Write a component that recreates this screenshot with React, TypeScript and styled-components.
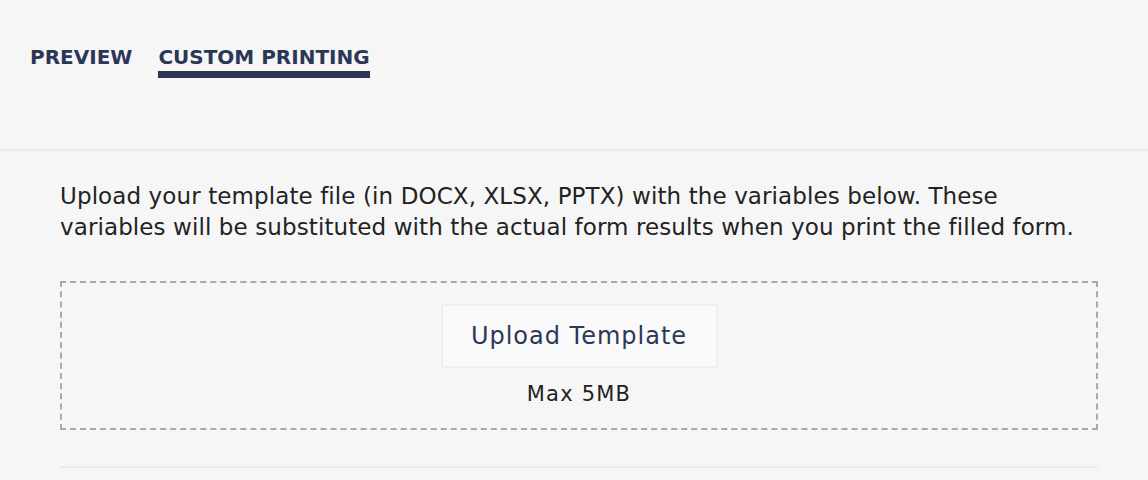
import React from "react";
import styled, { createGlobalStyle } from "styled-components";

const Global = createGlobalStyle`
  html, body { margin: 0; padding: 0; background: #f6f6f6; }
  body { font-family: "DejaVu Sans", "Noto Sans", sans-serif; color: #222; }
`;

const Page = styled.div`
  display: flex;
  flex-direction: column;
  min-height: 480px;
  background: #f6f6f6;
`;

const Header = styled.header`
  height: 151px;
  border-bottom: 2px solid #ebebeb;
  box-sizing: border-box;
  padding: 45px 0 0 30px;
  display: flex;
  align-items: flex-start;
  gap: 26px;
`;

const Tab = styled.button<{ $active?: boolean }>`
  appearance: none;
  background: none;
  border: none;
  padding: 0 0 2px;
  margin: 0;
  font-family: "DejaVu Sans", sans-serif;
  font-weight: 700;
  font-size: 20px;
  line-height: 24px;
  color: #2c3757;
  border-bottom: 7px solid ${(p) => (p.$active ? "#2c3757" : "transparent")};
  cursor: pointer;
`;

const Content = styled.main`
  padding: 30px 50px 0 60px;
  display: flex;
  flex-direction: column;
`;

const Intro = styled.p`
  margin: 0;
  font-size: 23px;
  line-height: 31px;
  letter-spacing: 0.1px;
  color: #222;
`;

const DropZone = styled.div`
  margin-top: 38px;
  height: 149px;
  box-sizing: border-box;
  border: 2px dashed #aaaaaa;
  display: flex;
  flex-direction: column;
  align-items: center;
  padding-top: 21px;
`;

const UploadButton = styled.button`
  width: 277px;
  height: 64px;
  box-sizing: border-box;
  background: #fafafa;
  border: 2px solid #eeeeee;
  border-radius: 3px;
  font-family: "DejaVu Sans", sans-serif;
  font-size: 24px;
  letter-spacing: 1px;
  color: #2c3757;
  cursor: pointer;
`;

const Hint = styled.div`
  margin-top: 13px;
  font-size: 21px;
  line-height: 26px;
  letter-spacing: 1.2px;
  color: #222;
`;

const Divider = styled.hr`
  margin: 36px 0 0;
  border: none;
  height: 2px;
  background: #ececec;
`;

export default function App() {
  return (
    <Page>
      <Global />
      <Header>
        <Tab>PREVIEW</Tab>
        <Tab $active>CUSTOM PRINTING</Tab>
      </Header>
      <Content>
        <Intro>
          Upload your template file (in DOCX, XLSX, PPTX) with the variables below. These
          <br />
          variables will be substituted with the actual form results when you print the filled form.
        </Intro>
        <DropZone>
          <UploadButton>Upload Template</UploadButton>
          <Hint>Max 5MB</Hint>
        </DropZone>
        <Divider />
      </Content>
    </Page>
  );
}
